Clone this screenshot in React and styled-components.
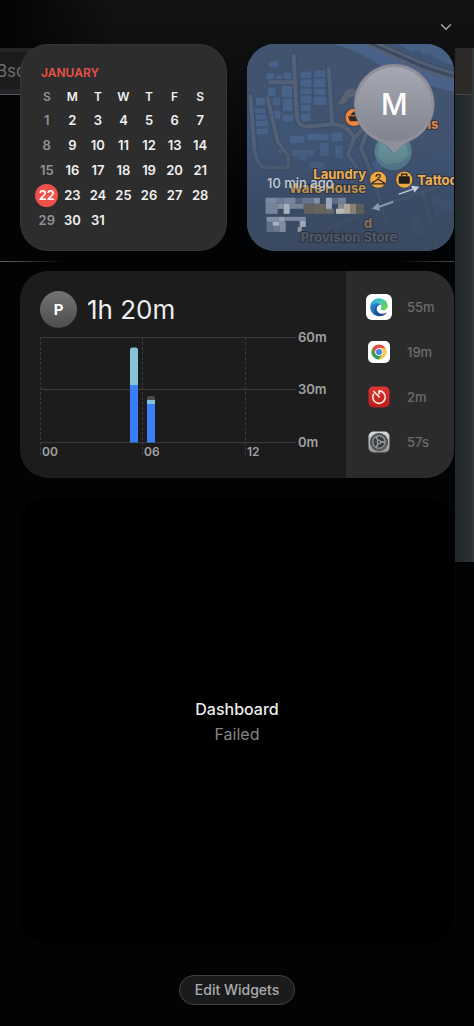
import styled, { createGlobalStyle } from "styled-components";
import { ChevronDown } from "lucide-react";

const weekDays = ["S", "M", "T", "W", "T", "F", "S"];
const weeks = [
  [1, 2, 3, 4, 5, 6, 7],
  [8, 9, 10, 11, 12, 13, 14],
  [15, 16, 17, 18, 19, 20, 21],
  [22, 23, 24, 25, 26, 27, 28],
  [29, 30, 31, null, null, null, null],
];
const today = 22;

const App = () => {
  return (
    <Page>
      <GlobalStyle />
      <Backdrop aria-hidden="true">
        <SearchStrip>Bsc</SearchStrip>
        <Divider />
        <WindowEdge />
      </Backdrop>
      <TopBar>
        <CollapseButton type="button" aria-label="Collapse">
          <ChevronDown size={18} strokeWidth={2} />
        </CollapseButton>
      </TopBar>
      <Widgets>
        <Calendar />
        <FindPeople />
        <ScreenTime />
        <Dashboard>
          <DashboardTitle>Dashboard</DashboardTitle>
          <DashboardStatus>Failed</DashboardStatus>
        </Dashboard>
      </Widgets>
      <EditButton type="button">Edit Widgets</EditButton>
    </Page>
  );
};

export default App;

const Calendar = () => (
  <CalendarCard>
    <Month>JANUARY</Month>
    <Days>
      <thead>
        <tr>
          {weekDays.map((day, i) => (
            <th key={i} scope="col">{day}</th>
          ))}
        </tr>
      </thead>
      <tbody>
        {weeks.map((week) => (
          <tr key={week[0]}>
            {week.map((day, i) => (
              <td key={i}>{day === today ? <Today>{day}</Today> : day}</td>
            ))}
          </tr>
        ))}
      </tbody>
    </Days>
  </CalendarCard>
);

// x, y, width, height
const buildings = [
  [22, 17, 10, 6], [20, 29, 8, 9], [29, 31, 7, 6], [37, 28, 9, 8], [21, 43, 8, 9],
  [9, 53, 14, 8], [26, 53, 8, 8], [35, 41, 11, 12], [36, 54, 10, 13], [8, 64, 11, 5],
  [9, 70, 11, 5], [9, 76, 13, 6], [10, 84, 12, 6], [27, 66, 7, 9], [36, 70, 11, 7],
  [54, 27, 11, 7], [54, 35, 11, 8], [54, 44, 11, 6], [54, 51, 11, 8], [54, 60, 10, 7],
  [54, 69, 10, 8], [67, 26, 12, 7], [67, 34, 12, 9], [67, 44, 12, 7], [67, 52, 13, 9],
  [43, 91, 15, 8], [60, 89, 22, 7], [84, 88, 12, 9], [32, 103, 10, 6], [45, 105, 23, 7],
  [73, 98, 9, 14], [88, 101, 8, 13], [62, 117, 16, 8], [100, 99, 7, 9], [52, 111, 9, 5],
];

const streets = [
  "M47 12l3 60q1 9 9 10l25-2q15-1 23 13M82 25l3 55M23 38h24",
  "M4 52l4 55q3 15 12 16l22 0-1-12-10-14-10-43",
  "M107 94l-6 16 8 12M107 94l15-16M122 80l-8 24 12 28 14 48",
  "M206 137l-80 27-50 22M176 150l15 56",
].join("");

// x, y, width, height, colour
const pixels = [
  [19, 153, 12, 6, "#8390a6"], [31, 153, 6, 6, "#71809a"], [37, 153, 12, 6, "#7d8ba2"], [55, 153, 12, 6, "#6b7890"],
  [67, 153, 6, 6, "#8c99ad"], [79, 153, 6, 12, "#a7b0bf"], [85, 153, 6, 6, "#637188"], [91, 153, 8, 6, "#79869b"],
  [19, 159, 12, 10, "#7e8aa0"], [31, 159, 6, 5, "#8e99ab"], [37, 159, 6, 10, "#b4bcc8"], [43, 159, 14, 5, "#7f8ba0"],
  [49, 153, 6, 6, "#58667f"], [57, 159, 10, 10, "#65635d"], [67, 159, 12, 10, "#6c675b"], [79, 164, 8, 5, "#6e6d68"],
  [91, 159, 6, 6, "#8d9093"], [97, 159, 6, 10, "#b9b3a2"], [103, 159, 6, 10, "#8f8876"], [109, 159, 8, 10, "#625f59"],
  [89, 164, 8, 5, "#c6c4be"], [20, 172, 12, 5, "#8b97aa"], [32, 172, 6, 5, "#a0abbb"], [38, 172, 21, 4, "#8391a6"],
  [20, 177, 6, 10, "#65748d"], [26, 177, 7, 4, "#b2bbc8"], [26, 181, 7, 6, "#6f7e95"], [33, 177, 6, 10, "#8995a8"],
  [53, 176, 6, 6, "#a9b2c0"], [51, 182, 4, 5, "#95a0b0"],
];

const FindPeople = () => (
  <MapCard>
    <MapDrawing viewBox="0 0 207 206" preserveAspectRatio="xMidYMid slice" role="img" aria-label="Map">
      <defs>
        <linearGradient id="mapShade" x1="0" y1="0" x2="0" y2="1">
          <stop offset="0.45" stopColor="#37475f" stopOpacity="0" />
          <stop offset="0.8" stopColor="#37475f" stopOpacity="0.75" />
          <stop offset="1" stopColor="#3a495f" stopOpacity="0.92" />
        </linearGradient>
        <linearGradient id="pinFill" x1="0" y1="0" x2="0" y2="1">
          <stop offset="0" stopColor="#a6a9b4" />
          <stop offset="1" stopColor="#81848f" />
        </linearGradient>
      </defs>
      <rect width="207" height="206" fill="#405475" />
      <path d="M0 0h120l60 36 27 9v60l-60 20L90 90 0 60z" fill="#42536f" />
      <path d="M86 0h34c25 10 58 27 87 36v12c-35-8-65-20-88-35-12-7-22-10-33-13z" fill="#4a6189" />
      <path d="M150 0h57v22l-20-8-4-5-7 2-4-5-8 2z" fill="#496086" />
      <g fill="#496289" stroke="#3f5375" strokeWidth="0.6">
        {buildings.map(([x, y, w, h], i) => (
          <rect key={i} x={x} y={y} width={w} height={h} />
        ))}
        <path d="M153 143l8-8 7 5-4 10-9 2zM184 155l8-4 2 5 8-4 3 14-17 6zM162 175l10-4 7 18-12 4zM181 138l9-4 4 9-9 5z" />
        <path d="M124 118l9-5 5 9-9 6zM97 126l8-5 9 14-9 4z" />
      </g>
      <path d="M91 60l7-12c4-5 9-5 14 0l-6 5c-4-2-6 5-10 7z" fill="#5b6373" />
      <g fill="none" strokeLinecap="round" strokeLinejoin="round">
        <path d={streets} stroke="#3c4d6a" strokeWidth="6" />
        <path d={streets} stroke="#536177" strokeWidth="4" />
        <path d="M118 -4l53 24q19 7 43 13" stroke="#3a495f" strokeWidth="9" />
        <path d="M120 -5l53 23q18 7 41 13M116 -1l53 24q20 8 45 14" stroke="#526073" strokeWidth="3" />
      </g>
      <circle cx="146" cy="107" r="18.5" fill="#6293a0" opacity="0.8" />
      <path d="M133 96l13 13 11-12 5 13-9 8-15 2-8-9z" fill="#82b5aa" opacity="0.4" />
      <rect width="207" height="206" fill="url(#mapShade)" />
      <MapLabel x="191" y="85" textAnchor="end" $color="#e08a48">ns</MapLabel>
      <MapLabel x="119" y="134" textAnchor="end">Laundry</MapLabel>
      <MapLabel x="119" y="148" textAnchor="end" $color="#bd9451">Ware House</MapLabel>
      <MapLabel x="170" y="140">Tattoo</MapLabel>
      <g stroke="#2e3442" strokeWidth="0.8">
        <circle cx="107" cy="73" r="9" fill="#f0853c" />
        <circle cx="131" cy="135" r="8.5" fill="#eda843" />
        <circle cx="157" cy="135" r="8.5" fill="#eda843" />
      </g>
      <path d="M101 72h10v5h-8zM103 71l4-4 3 4z" fill="#2c2925" />
      <path d="M129 132q0-2.200 2-2.200t2 1.800q0 1.400-2 1.800v1.200l-6 3.600q-.8 1 .5 1h11q1.300 0 .5-1l-6-3.600" fill="none" stroke="#302b24" strokeWidth="1.200" strokeLinejoin="round" />
      <path d="M154.500 132v-2.500h5v2.500" fill="none" stroke="#211f1d" strokeWidth="1.300" />
      <rect x="151.500" y="131.500" width="11" height="7.500" rx="1" fill="#211f1d" />
      <path d="M151 149l14-5-1-3 8 1-5 6-1-3-14 5z" fill="#c3ccda" />
      <path d="M146 156l-14 5-1-3-6 6 8 2-1-3 14-5z" fill="#8c9bb2" />
      {pixels.map(([x, y, w, h, color], i) => (
        <rect key={i} x={x} y={y} width={w} height={h} fill={color} opacity="0.9" />
      ))}
      <MapLabel x="117" y="183" $color="#84755d">d</MapLabel>
      <MapLabel x="54" y="197" $color="#525a68">Provision Store</MapLabel>
      <path d="M147 110c-4-6-7-9-15-13a40 40 0 1 1 30 0c-8 4-11 7-15 13z" fill="#8e919b" stroke="#6e7380" strokeWidth="0.5" />
      <circle cx="147" cy="60" r="37" fill="url(#pinFill)" />
      <PinInitial x="147" y="71" textAnchor="middle">M</PinInitial>
    </MapDrawing>
    <LastSeen>10 min ago</LastSeen>
  </MapCard>
);

const ScreenTime = () => (
  <ScreenTimeCard>
    <Usage>
      <Total>
        <Avatar>P</Avatar>
        <span>1h 20m</span>
      </Total>
      <UsageChart />
    </Usage>
    <AppList>
      {apps.map(({ name, time, Icon }) => (
        <AppRow key={name}>
          <Icon />
          <span>{time}</span>
        </AppRow>
      ))}
    </AppList>
  </ScreenTimeCard>
);

const UsageChart = () => (
  <ChartDrawing viewBox="0 0 290 128" role="img" aria-label="Screen time by hour">
    <g stroke="#3a3a3c" strokeWidth="1">
      <path d="M0 8.500h256M0 60.500h256M0 113.500h256" />
      <path d="M0.500 8v118M102.500 8v118M205.500 8v118" strokeDasharray="3 2" />
    </g>
    <path d="M90 113.500V56h8v57.500z" fill="#3a7ef8" />
    <path d="M90 56V21q0-2.500 2.500-2.500h3q2.500 0 2.500 2.500v35z" fill="#86c3d9" />
    <path d="M107 113.500V75h8v38.500z" fill="#3a7ef8" />
    <path d="M107 75v-4h8v4z" fill="#86c3d9" />
    <path d="M107 71v-2q0-2 2-2h4q2 0 2 2v2z" fill="#4c4c4e" />
    <ChartLabel x="258" y="13">60m</ChartLabel>
    <ChartLabel x="258" y="65">30m</ChartLabel>
    <ChartLabel x="258" y="118">0m</ChartLabel>
    <ChartLabel x="2" y="127" $small>00</ChartLabel>
    <ChartLabel x="104" y="127" $small>06</ChartLabel>
    <ChartLabel x="207" y="127" $small>12</ChartLabel>
  </ChartDrawing>
);

const EdgeIcon = () => (
  <AppIcon viewBox="0 0 26 26" $size={26}>
    <defs>
      <linearGradient id="edgeTop" x1="0" y1="0" x2="1" y2="0.5">
        <stop offset="0" stopColor="#2fa3dc" />
        <stop offset="0.6" stopColor="#45c7b5" />
        <stop offset="1" stopColor="#68d25d" />
      </linearGradient>
      <linearGradient id="edgeBody" x1="0" y1="0" x2="0.7" y2="1">
        <stop offset="0" stopColor="#2d8fd8" />
        <stop offset="1" stopColor="#1c4e9d" />
      </linearGradient>
    </defs>
    <rect width="26" height="26" rx="6" fill="#fff" />
    <path d="M4.200 13C4.200 8 8 4.200 13 4.200c5.200 0 8.800 3.700 8.800 7.600 0 3-2.200 4.400-4.600 4.400-1.800 0-2.700-.6-2.700-1.200s1-.9 1-2.400c0-1.900-2-3.400-4.600-3.400-3.200 0-5.800 1.500-6.700 3.800z" fill="url(#edgeTop)" />
    <path d="M4.200 13c.5-2.600 3.100-4 6.300-4 2 0 3.600.8 4.400 1.900-2.300-.4-4.300 1.500-4.300 4 0 3 2.800 5.300 6 5.300 1.400 0 2.600-.4 3.700-1-1.600 1.800-4.100 3-6.900 3-5.200 0-9.200-4-9.200-9.200z" fill="url(#edgeBody)" />
    <path d="M10.600 14.900c0 3.200 2.900 4.600 5.500 4.600 1.900 0 3.300-.5 4.300-1 .4-.2.700.2.400.6-1.600 2-4.200 3.100-6.800 3.100-3.700-.8-6-4.300-5.300-7.500.5-2.400 2.800-4 5-4-1.900.7-3.100 2.200-3.100 4.200z" fill="#174382" opacity="0.65" />
  </AppIcon>
);

const ChromeIcon = () => (
  <AppIcon viewBox="0 0 22 22">
    <rect width="22" height="22" rx="5" fill="#fff" />
    <path d="M11 7.200h6.580A7.600 7.600 0 0 1 11 18.600l3.300-5.700L11 11z" fill="#f7ca4d" />
    <path d="M4.420 7.200L7.700 12.900 11 14.800l3.290-1.900L11 18.600A7.600 7.600 0 0 1 4.420 7.200z" fill="#3d9c58" />
    <path d="M4.420 7.200a7.600 7.600 0 0 1 13.160 0H11l-3.300 5.700z" fill="#df5143" />
    <circle cx="11" cy="11" r="3.800" fill="#fff" />
    <circle cx="11" cy="11" r="3" fill="#4583ed" />
  </AppIcon>
);

const TimerIcon = () => (
  <AppIcon viewBox="0 0 22 22">
    <defs>
      <linearGradient id="timerFill" x1="0" y1="0" x2="0" y2="1">
        <stop offset="0" stopColor="#e0352f" />
        <stop offset="1" stopColor="#b81f1d" />
      </linearGradient>
    </defs>
    <rect x="0.500" y="0.500" width="21" height="21" rx="5" fill="url(#timerFill)" />
    <path d="M11 8V4.900a6.200 6.200 0 1 1-5.600 3.500M5.800 5.500l5.400 5.500" fill="none" stroke="#fff0e3" strokeWidth="1.600" strokeLinecap="round" strokeLinejoin="round" />
  </AppIcon>
);

const SettingsIcon = () => (
  <AppIcon viewBox="0 0 22 22">
    <defs>
      <linearGradient id="settingsFill" x1="0" y1="0" x2="0" y2="1">
        <stop offset="0" stopColor="#d8dadc" />
        <stop offset="1" stopColor="#8d8f92" />
      </linearGradient>
    </defs>
    <rect x="0.500" y="0.500" width="21" height="21" rx="5" fill="url(#settingsFill)" />
    <circle cx="11" cy="11" r="9" fill="#3b3d40" />
    <circle cx="11" cy="11" r="7.700" fill="none" stroke="#85888b" strokeWidth="0.900" strokeDasharray="1.200 0.800" />
    <circle cx="11" cy="11" r="6.200" fill="none" stroke="#8d9093" strokeWidth="1.400" />
    <path d="M11 11h6M11 11l-3-5.200M11 11l-3 5.200" stroke="#a4a7aa" strokeWidth="1.400" />
    <circle cx="11" cy="11" r="1.800" fill="#46484b" stroke="#a4a7aa" strokeWidth="1" />
  </AppIcon>
);

const apps = [
  { name: "Edge", time: "55m", Icon: EdgeIcon },
  { name: "Chrome", time: "19m", Icon: ChromeIcon },
  { name: "Timer", time: "2m", Icon: TimerIcon },
  { name: "Settings", time: "57s", Icon: SettingsIcon },
];

const GlobalStyle = createGlobalStyle`
  * {
    box-sizing: border-box;
  }
  body {
    margin: 0;
    background-color: #020304;
    font-family: Inter, "Liberation Sans", sans-serif;
  }
`

const Page = styled.div`
  position: relative;
  min-height: 100vh;
  padding-bottom: 22px;
  display: flex;
  flex-direction: column;
  overflow: hidden;
`

// what shows through from the desktop behind the panel
const Backdrop = styled.div`
  position: absolute;
  inset: 0;
  background:
    linear-gradient(to right, #020304, transparent 25%),
    linear-gradient(to bottom, #121314, #0f1011 40px, #020304 200px);
`

const SearchStrip = styled.div`
  position: absolute;
  top: 48px;
  left: 0;
  width: 40px;
  height: 47px;
  padding-bottom: 4px;
  display: flex;
  align-items: center;
  overflow: hidden;
  text-indent: -4px;
  font-size: 17px;
  color: #6d6e70;
  background-color: #1b1c1e;
  border-top: 4px solid #252628;
  border-bottom: 1px solid #55575a;
  box-shadow: inset 0 -5px #252628;
`

const Divider = styled.div`
  position: absolute;
  top: 261px;
  left: 0;
  right: 20px;
  height: 1px;
  background: linear-gradient(to right, #66686a, transparent 14%, transparent 88%, #4a4845);
`

const WindowEdge = styled.div`
  position: absolute;
  top: 48px;
  right: 0;
  width: 19px;
  height: 514px;
  border-right: 2px solid #32373a;
  background:
    linear-gradient(#2a2828, #2d2b2a) top / 100% 46px no-repeat,
    linear-gradient(#454545, #454545) 0 46px / 100% 1px no-repeat,
    linear-gradient(to right, #22282a, #2b3033);
`

const TopBar = styled.header`
  position: relative;
  height: 44px;
  padding: 9px 18px 0;
  display: flex;
  justify-content: flex-end;
`

const CollapseButton = styled.button`
  width: 20px;
  height: 36px;
  padding: 0;
  display: flex;
  align-items: center;
  justify-content: center;
  color: #a5a5a6;
  background: none;
  border: none;
  cursor: pointer;
`

const Widgets = styled.main`
  position: relative;
  padding: 0 20px;
  display: grid;
  grid-template-columns: 1fr 1fr;
  gap: 20px;
`

const Card = styled.section`
  min-height: 207px;
  border-radius: 28px;
  overflow: hidden;
`

const CalendarCard = styled(Card)`
  padding: 20px 13px 0;
  background-color: #2d2d2e;
  border: 1px solid #353536;
`

const Month = styled.h2`
  margin: 0 0 3px;
  padding-left: 7px;
  font-size: 12px;
  line-height: 16px;
  font-weight: 600;
  color: #ea5148;
`

const Days = styled.table`
  width: 100%;
  table-layout: fixed;
  border-collapse: collapse;
  font-size: 13px;
  line-height: 23px;
  color: #f0f0f0;
  th, td {
    height: 25px;
    padding: 0;
    font-weight: 600;
    text-align: center;
  }
  th {
    height: 24px;
    font-size: 12px;
  }
  th:first-child, td:first-child {
    color: #929293;
  }
`

const Today = styled.span`
  display: block;
  width: 23px;
  margin: 0 auto;
  border-radius: 50%;
  color: #ffffff;
  background-color: #ed5149;
`

const MapCard = styled(Card)`
  position: relative;
  background-color: #405373;
`

const MapDrawing = styled.svg`
  display: block;
  width: 100%;
  height: 100%;
`

const MapLabel = styled.text`
  font-size: 13px;
  font-weight: 700;
  fill: ${({ $color }) => $color || "#edaf52"};
  stroke: #2c3341;
  stroke-width: 2px;
  paint-order: stroke;
`

const PinInitial = styled.text`
  font-size: 29px;
  font-weight: 500;
  fill: #ffffff;
`

const LastSeen = styled.p`
  position: absolute;
  left: 20px;
  bottom: 60px;
  margin: 0;
  font-size: 13px;
  line-height: 16px;
  font-weight: 500;
  color: #c3cad5;
`

const ScreenTimeCard = styled(Card)`
  grid-column: 1 / -1;
  display: flex;
  background-color: #1c1c1d;
`

const Usage = styled.div`
  flex: 1;
  padding: 20px 0 0 20px;
`

const Total = styled.div`
  display: flex;
  align-items: center;
  gap: 10px;
  font-size: 26px;
  line-height: 37px;
  color: #ededee;
`

const Avatar = styled.span`
  width: 37px;
  height: 37px;
  border-radius: 50%;
  text-align: center;
  font-size: 15px;
  font-weight: 700;
  color: #ffffff;
  background: linear-gradient(#747474, #4c4c4c);
`

const ChartDrawing = styled.svg`
  display: block;
  width: 290px;
  height: 128px;
  margin-top: 1px;
`

const ChartLabel = styled.text`
  font-size: ${({ $small }) => ($small ? "12px" : "13px")};
  font-weight: 600;
  fill: #a0a0a1;
`

const AppList = styled.ul`
  width: 108px;
  margin: 0;
  padding: 13px 0 0 20px;
  list-style: none;
  background-color: #2b2b2c;
`

const AppRow = styled.li`
  height: 45px;
  display: grid;
  grid-template-columns: 26px 1fr;
  align-items: center;
  justify-items: center;
  column-gap: 15px;
  font-size: 13px;
  font-weight: 500;
  color: #6b6b6c;
  span {
    justify-self: start;
  }
`

const AppIcon = styled.svg`
  width: ${({ $size }) => $size || 22}px;
  height: ${({ $size }) => $size || 22}px;
`

const Dashboard = styled(Card)`
  grid-column: 1 / -1;
  min-height: 446px;
  padding-top: 2px;
  display: flex;
  flex-direction: column;
  align-items: center;
  justify-content: center;
  font-size: 16px;
  line-height: 25px;
  background-color: #000000;
`

const DashboardTitle = styled.h2`
  margin: 0;
  font-size: 16px;
  font-weight: 500;
  color: #ececec;
`

const DashboardStatus = styled.p`
  margin: 0;
  color: #858585;
`

const EditButton = styled.button`
  position: relative;
  align-self: center;
  height: 30px;
  margin-top: 31px;
  padding: 0 15px 2px;
  font-family: inherit;
  font-size: 14px;
  font-weight: 500;
  color: #ababac;
  background-color: #1a1b1c;
  border: 1px solid #414243;
  border-radius: 15px;
  cursor: pointer;
`
